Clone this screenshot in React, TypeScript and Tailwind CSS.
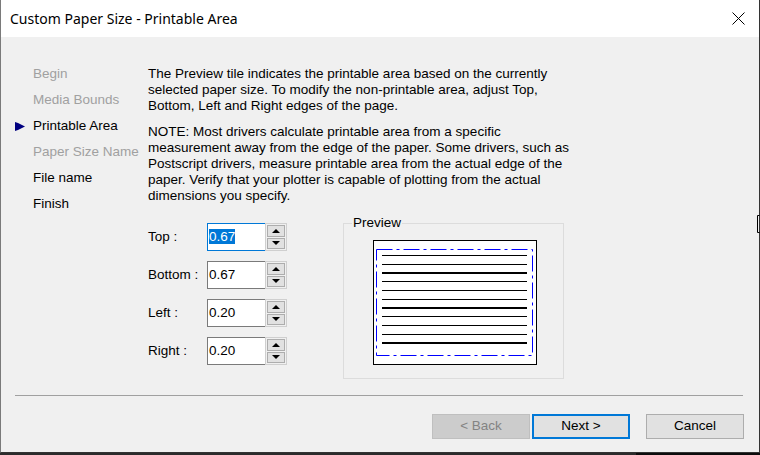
import React from "react";

const steps = [
  { label: "Begin", enabled: false },
  { label: "Media Bounds", enabled: false },
  { label: "Printable Area", enabled: true, current: true },
  { label: "Paper Size Name", enabled: false },
  { label: "File name", enabled: true },
  { label: "Finish", enabled: true },
];

const margins = [
  { label: "Top :", value: "0.67", focused: true },
  { label: "Bottom :", value: "0.67" },
  { label: "Left :", value: "0.20" },
  { label: "Right :", value: "0.20" },
];

function Spinner() {
  return (
    <div className="-ml-px w-[22px] h-[28px] border border-[#cfcfcf] bg-[#f0f0f0] flex flex-col gap-px p-px">
      <div className="flex-1 border border-[#adadad] bg-[#e1e1e1] flex items-center justify-center">
        <svg width="8" height="4" viewBox="0 0 8 4">
          <polygon points="4,0 8,4 0,4" fill="#000" />
        </svg>
      </div>
      <div className="flex-1 border border-[#adadad] bg-[#e1e1e1] flex items-center justify-center">
        <svg width="8" height="4" viewBox="0 0 8 4">
          <polygon points="0,0 8,0 4,4" fill="#000" />
        </svg>
      </div>
    </div>
  );
}

function MarginRow({ label, value, focused }: { label: string; value: string; focused?: boolean }) {
  return (
    <div className="flex items-center h-[28px]">
      <span className="w-[59px]">{label}</span>
      <div
        className={
          "w-[59px] h-[28px] border bg-white pl-[1px] pt-[3px] " +
          (focused ? "border-[#0078d7]" : "border-[#7a7a7a]")
        }
      >
        <span className={"leading-[15px] inline-block " + (focused ? "bg-[#0078d7] text-white" : "")}>
          {value}
        </span>
      </div>
      <Spinner />
    </div>
  );
}

function PaperPreview() {
  const lines = Array.from({ length: 11 }, (_, i) => i);
  return (
    <svg width="164" height="125" viewBox="0 0 164 125">
      <rect x="0.5" y="0.5" width="163" height="124" fill="#fff" stroke="#000" />
      <rect
        x="3.5"
        y="9.5"
        width="156"
        height="106"
        fill="none"
        stroke="#0000ff"
        strokeDasharray="16 4 3 4"
      />
      {lines.map((i) => {
        const thick = i % 4 === 2;
        const y = Math.round(15 + i * 8.77) + (thick ? 0 : 0.5);
        return (
          <line
            key={i}
            x1="9"
            x2="154"
            y1={y}
            y2={y}
            stroke="#000"
            strokeWidth={thick ? 2 : 1}
          />
        );
      })}
    </svg>
  );
}

export default function App() {
  return (
    <div className="w-[760px] h-[455px] bg-[#1f1f1f] relative font-['Liberation_Sans',Arial,sans-serif] text-[13.5px] text-black">
      <div className="w-[760px] h-[453px] bg-[#f0f0f0] border-l border-l-[#7a7a7a] border-r border-r-[#333333] border-b border-b-[#333333] flex flex-col">
        {/* title bar */}
        <div className="h-[37px] bg-white flex items-center justify-between shrink-0">
          <span className="pl-[9px] font-['Noto_Sans',sans-serif] text-[14px] text-black">
            Custom Paper Size - Printable Area
          </span>
          <svg width="13" height="13" viewBox="0 0 13 13" className="mr-[14px]">
            <line x1="0.5" y1="0.5" x2="12.5" y2="12.5" stroke="#000" strokeWidth="1" />
            <line x1="12.5" y1="0.5" x2="0.5" y2="12.5" stroke="#000" strokeWidth="1" />
          </svg>
        </div>

        {/* body */}
        <div className="h-[358px] flex shrink-0">
          <ul className="w-[147px] pl-[14px] pt-[24px]">
            {steps.map((s) => (
              <li key={s.label} className="h-[26px] flex items-center">
                <span className="w-[18px] flex items-center">
                  {s.current && (
                    <svg width="10" height="9" viewBox="0 0 10 9">
                      <polygon points="0,0 3,1 10,4.5 3,8 0,9" fill="#000080" />
                    </svg>
                  )}
                </span>
                <span className={s.enabled ? "text-black" : "text-[#a0a0a0]"}>{s.label}</span>
              </li>
            ))}
          </ul>

          <div className="pt-[29px]">
            <p className="leading-[16px] whitespace-nowrap">
              The Preview tile indicates the printable area based on the currently
              <br />
              selected paper size. To modify the non-printable area, adjust Top,
              <br />
              Bottom, Left and Right edges of the page.
            </p>
            <p className="leading-[16px] mt-[10px] whitespace-nowrap">
              NOTE: Most drivers calculate printable area from a specific
              <br />
              measurement away from the edge of the paper. Some drivers, such as
              <br />
              Postscript drivers, measure printable area from the actual edge of the
              <br />
              paper. Verify that your plotter is capable of plotting from the actual
              <br />
              dimensions you specify.
            </p>

            <div className="mt-[19px] flex">
              <div className="flex flex-col gap-[10px]">
                {margins.map((m) => (
                  <MarginRow key={m.label} {...m} />
                ))}
              </div>

              <div className="relative ml-[56px] w-[221px] h-[156px] border border-[#dcdcdc] pl-[29px] pt-[16px]">
                <span className="absolute left-[8px] -top-[9px] bg-[#f0f0f0] px-px leading-[16px]">
                  Preview
                </span>
                <PaperPreview />
              </div>
            </div>
          </div>
        </div>

        {/* separator */}
        <div className="ml-[14px] mr-[16px] h-px bg-[#a0a0a0] shrink-0" />

        {/* buttons */}
        <div className="mt-[18px] flex justify-end pr-[15px]">
          <button className="w-[98px] h-[25px] bg-[#cccccc] border border-[#bfbfbf] text-[#838383]">
            &lt; Back
          </button>
          <button className="ml-[2px] w-[98px] h-[25px] bg-[#e1e1e1] border-2 border-[#0078d7] text-black">
            Next &gt;
          </button>
          <button className="ml-[16px] w-[98px] h-[25px] bg-[#e1e1e1] border border-[#adadad] text-black">
            Cancel
          </button>
        </div>
      </div>

      {/* bottom strip behind window */}
      <div className="flex h-[2px]">
        <div className="w-[636px] bg-[#2b2b2b]" />
        <div className="flex-1 bg-[#0c0c0c]" />
      </div>

      {/* mouse cursor at right edge */}
      <svg width="4" height="18" viewBox="0 0 4 18" className="absolute left-[756px] top-[215px]">
        <path d="M3.5 0.5 H1.5 V17.5 H3.5" fill="none" stroke="#000" strokeWidth="1" />
      </svg>
    </div>
  );
}
